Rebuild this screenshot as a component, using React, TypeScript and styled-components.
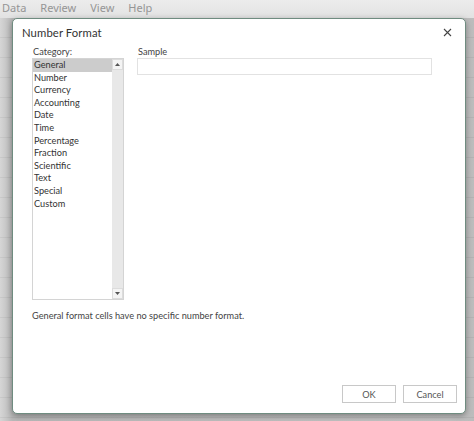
import styled, { createGlobalStyle } from 'styled-components'
import { FC } from 'react'

const GlobalStyle = createGlobalStyle`
  html, body { margin: 0; padding: 0; }
  body {
    width: 474px;
    height: 421px;
    overflow: hidden;
    font-family: Lato, "Noto Sans", sans-serif;
  }
`

const categories = [
    'General', 'Number', 'Currency', 'Accounting', 'Date', 'Time',
    'Percentage', 'Fraction', 'Scientific', 'Text', 'Special', 'Custom'
]

const menus = ['Data', 'Review', 'View', 'Help']

const App: FC = () => {
    return <Page>
        <GlobalStyle/>
        <MenuBar>
            {menus.map(m => <MenuItem key={m}>{m}</MenuItem>)}
        </MenuBar>
        <Backdrop>
            <Dialog>
                <TitleRow>
                    <Title>Number Format</Title>
                    <CloseButton aria-label="Close">
                        <svg width="9" height="9" viewBox="0 0 9 9">
                            <path d="M1 1 L8 8 M8 1 L1 8" stroke="#444" strokeWidth="1.1" fill="none"/>
                        </svg>
                    </CloseButton>
                </TitleRow>
                <Content>
                    <Column>
                        <Label>Category:</Label>
                        <ListBox>
                            <Items>
                                {categories.map((c, i) => <Item key={c} $selected={i === 0}>{c}</Item>)}
                            </Items>
                            <ScrollBar>
                                <ArrowBox>
                                    <svg width="5" height="3" viewBox="0 0 5 3"><path d="M0 3 L2.5 0 L5 3 Z" fill="#555"/></svg>
                                </ArrowBox>
                                <ArrowBox>
                                    <svg width="5" height="3" viewBox="0 0 5 3"><path d="M0 0 L2.5 3 L5 0 Z" fill="#555"/></svg>
                                </ArrowBox>
                            </ScrollBar>
                        </ListBox>
                    </Column>
                    <SampleColumn>
                        <Label>Sample</Label>
                        <SampleBox/>
                    </SampleColumn>
                </Content>
                <Description>General format cells have no specific number format.</Description>
                <Footer>
                    <Button>OK</Button>
                    <Button>Cancel</Button>
                </Footer>
            </Dialog>
        </Backdrop>
    </Page>
}

export default App

const Page = styled.div`
  width: 474px;
  height: 421px;
  display: flex;
  flex-direction: column;
  background: #c9c9c9;
`

const MenuBar = styled.div`
  height: 18px;
  display: flex;
  align-items: center;
  padding-left: 2px;
  background: linear-gradient(#ececec, #e2e2e2);
`

const MenuItem = styled.span`
  font-family: "Noto Sans", sans-serif;
  font-size: 11px;
  color: #959595;
  margin-right: 14px;
  line-height: 14px;
  padding-bottom: 2px;
`

const Backdrop = styled.div`
  flex: 1;
  display: flex;
  padding: 0 8px 7px 12px;
  background:
    repeating-linear-gradient(180deg, transparent 0 19px, rgba(0,0,0,0.05) 19px 20px),
    linear-gradient(90deg, #d6d6d6, #b9b9b9 12px, #c4c4c4 95%, #bcbcbc);
`

const Dialog = styled.div`
  flex: 1;
  display: flex;
  flex-direction: column;
  background: #ffffff;
  border: 1px solid #6f8c80;
  border-radius: 5px;
  box-shadow: 0 2px 6px rgba(0, 0, 0, 0.35);
  padding: 0 8px 10px 9px;
  color: #333;
`

const TitleRow = styled.div`
  height: 27px;
  display: flex;
  align-items: center;
  justify-content: space-between;
`

const Title = styled.div`
  font-size: 11.3px;
  color: #333;
  letter-spacing: 0.1px;
`

const CloseButton = styled.div`
  width: 14px;
  height: 14px;
  display: flex;
  align-items: center;
  justify-content: center;
  margin-right: 3px;
  margin-bottom: 1px;
`

const Content = styled.div`
  display: flex;
  padding-left: 10px;
  gap: 13px;
`

const Column = styled.div`
  display: flex;
  flex-direction: column;
`

const SampleColumn = styled(Column)`
  width: 295px;
`

const Label = styled.div`
  font-size: 9.2px;
  line-height: 12px;
  color: #444;
  padding-left: 1px;
`

const ListBox = styled.div`
  width: 90px;
  height: 240px;
  border: 1px solid #d4d4d4;
  display: flex;
`

const Items = styled.div`
  flex: 1;
  display: flex;
  flex-direction: column;
`

const Item = styled.div<{ $selected?: boolean }>`
  font-size: 9.2px;
  line-height: 12.6px;
  height: 12.6px;
  padding-left: 1px;
  color: #333;
  background: ${p => p.$selected ? '#cccccc' : 'transparent'};
`

const ScrollBar = styled.div`
  width: 11px;
  background: #e8e8e8;
  display: flex;
  flex-direction: column;
  justify-content: space-between;
`

const ArrowBox = styled.div`
  height: 11px;
  display: flex;
  align-items: center;
  justify-content: center;
  background: #f4f4f4;
  border: 1px solid #dcdcdc;
  box-sizing: border-box;
`

const SampleBox = styled.div`
  height: 15px;
  border: 1px solid #e2e2e2;
`

const Description = styled.div`
  margin-top: 10px;
  padding-left: 10px;
  font-size: 9.2px;
  color: #444;
`

const Footer = styled.div`
  margin-top: auto;
  display: flex;
  justify-content: flex-end;
  gap: 7px;
`

const Button = styled.div`
  width: 52px;
  height: 16px;
  border: 1px solid #c8c8c8;
  display: flex;
  align-items: center;
  justify-content: center;
  font-size: 9.2px;
  color: #555;
`
